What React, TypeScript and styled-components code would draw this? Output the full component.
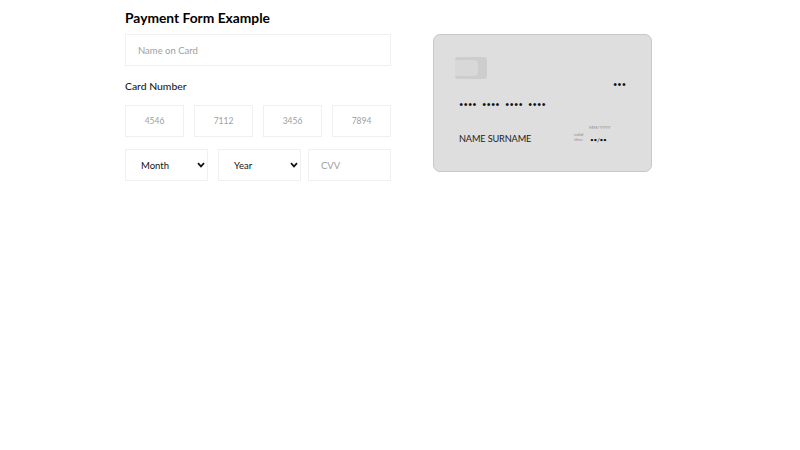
import React from "react";
import styled, { createGlobalStyle } from "styled-components";

const chevron =
  "url(\"data:image/svg+xml,%3Csvg xmlns='http://www.w3.org/2000/svg' width='8' height='6' viewBox='0 0 8 6'%3E%3Cpath d='M1 1.2 L4 4.4 L7 1.2' fill='none' stroke='%23111' stroke-width='1.7'/%3E%3C/svg%3E\")";

const Global = createGlobalStyle`
  html, body { margin: 0; padding: 0; background: #fff; }
  body { font-family: "Lato", "Noto Sans", "Liberation Sans", sans-serif; color: #111; }
`;

const Page = styled.div`
  display: flex;
  align-items: flex-start;
  padding-left: 125px;
  gap: 42px;
  width: 800px;
  height: 450px;
  box-sizing: border-box;
`;

const FormColumn = styled.form`
  width: 266px;
  display: flex;
  flex-direction: column;
`;

const Title = styled.h1`
  margin: 0;
  height: 34px;
  padding-top: 9px;
  box-sizing: border-box;
  font-size: 13.8px;
  line-height: 18px;
  font-weight: 700;
  color: #000;
`;

const Field = styled.input<{ $center?: boolean }>`
  width: 100%;
  min-width: 0;
  height: 32px;
  box-sizing: border-box;
  border: 1px solid #f0f0f0;
  background: #fff;
  outline: none;
  font-family: inherit;
  font-size: ${(p) => (p.$center ? "8.5px" : "9.5px")};
  padding: 0 12px;
  text-align: ${(p) => (p.$center ? "center" : "left")};
  &::placeholder { color: #a0a0a0; opacity: 1; }
`;

const SectionLabel = styled.label`
  display: block;
  margin: 13px 0 12px;
  font-size: 10.4px;
  line-height: 15px;
  font-weight: 500;
  color: #222;
`;

const NumberRow = styled.div`
  display: grid;
  grid-template-columns: repeat(4, 59px);
  justify-content: space-between;
  margin-top: -1px;
`;

const ExpiryRow = styled.div`
  display: flex;
  margin-top: 12px;
`;

const Select = styled.select`
  flex: 0 0 83px;
  height: 32px;
  box-sizing: border-box;
  border: 1px solid #f0f0f0;
  background: #fff ${chevron} no-repeat right 2px center;
  appearance: none;
  outline: none;
  font-family: inherit;
  font-size: 9.5px;
  color: #111;
  padding: 0 0 0 15px;
  & + & { margin-left: 10px; }
  & + input { margin-left: 7px; flex: 0 0 83px; width: 83px; }
`;

const Card = styled.div`
  width: 219px;
  height: 138px;
  margin-top: 34px;
  box-sizing: border-box;
  background: #dedede;
  border: 1px solid #c8c8c8;
  border-radius: 7px;
  padding: 22px 26px 0 25px;
  display: flex;
  flex-direction: column;
`;

const Chip = styled.div`
  width: 32px;
  height: 22px;
  margin-left: -4px;
  background: #cdcdcd;
  border-radius: 3px;
  display: flex;
  align-items: center;
`;

const ChipInner = styled.div`
  width: 23px;
  height: 16px;
  background: #d8d8d8;
  border-radius: 0 4px 4px 0;
`;

const Cvv = styled.div`
  align-self: flex-end;
  height: 9px;
  margin: 1px -1px 0 0;
  font-size: 7.5px;
  line-height: 10px;
  color: #111;
`;

const CardNumber = styled.div`
  margin-top: 11px;
  font-size: 7.5px;
  line-height: 10px;
  letter-spacing: 0.1px;
  word-spacing: 3.2px;
  white-space: nowrap;
  color: #111;
`;

const CardFooter = styled.div`
  display: flex;
  align-items: flex-end;
  margin-top: 15px;
`;

const Holder = styled.div`
  width: 115px;
  margin-bottom: -1px;
  font-size: 9.2px;
  line-height: 14px;
  letter-spacing: -0.15px;
  color: #222;
  white-space: nowrap;
`;

const ValidThru = styled.div`
  width: 9px;
  margin-right: 6px;
  margin-bottom: 3px;
  font-size: 4.5px;
  line-height: 5px;
  text-align: center;
  color: #8a8a8a;
`;

const ExpiryBlock = styled.div`
  display: flex;
  flex-direction: column;
`;

const ExpiryHint = styled.div`
  font-size: 4.5px;
  line-height: 6px;
  color: #8a8a8a;
  margin-bottom: 4px;
`;

const ExpiryValue = styled.div`
  margin-left: 1px;
  font-size: 6.5px;
  line-height: 10px;
  letter-spacing: -0.3px;
  color: #111;
`;

export default function App() {
  return (
    <>
      <Global />
      <Page>
        <FormColumn>
          <Title>Payment Form Example</Title>
          <Field placeholder="Name on Card" />
          <SectionLabel>Card Number</SectionLabel>
          <NumberRow>
            <Field $center placeholder="4546" />
            <Field $center placeholder="7112" />
            <Field $center placeholder="3456" />
            <Field $center placeholder="7894" />
          </NumberRow>
          <ExpiryRow>
            <Select defaultValue="Month">
              <option>Month</option>
            </Select>
            <Select defaultValue="Year">
              <option>Year</option>
            </Select>
            <Field placeholder="CVV" />
          </ExpiryRow>
        </FormColumn>
        <Card>
          <Chip>
            <ChipInner />
          </Chip>
          <Cvv>•••</Cvv>
          <CardNumber>•••• •••• •••• ••••</CardNumber>
          <CardFooter>
            <Holder>NAME SURNAME</Holder>
            <ValidThru>
              valid
              <br />
              thru
            </ValidThru>
            <ExpiryBlock>
              <ExpiryHint>MM/YYYY</ExpiryHint>
              <ExpiryValue>••/••</ExpiryValue>
            </ExpiryBlock>
          </CardFooter>
        </Card>
      </Page>
    </>
  );
}
